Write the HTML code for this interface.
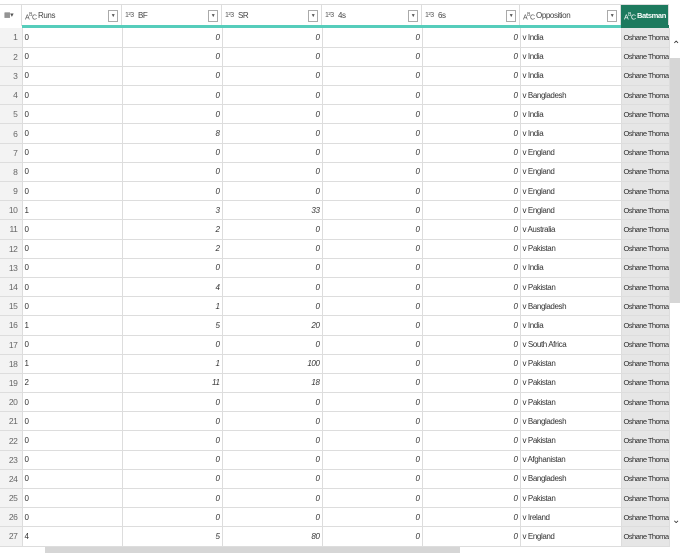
<!DOCTYPE html><html><head><style>
body{margin:0;width:685px;height:553px;overflow:hidden;background:#fff;font-family:"Liberation Sans",sans-serif;font-size:8px;color:#333;position:relative;letter-spacing:-0.4px}
.hdr{position:absolute;top:4px;left:0;height:21px;width:669px;border-top:1px solid #ddd;background:#fff}
.h{position:absolute;top:0;height:21px;border-right:1px solid #ddd;box-sizing:border-box;line-height:21px;font-size:8px;color:#444}
.h .ic{position:absolute;left:3px;top:0;font-size:7px;color:#555;letter-spacing:-0.5px}
.h .t{position:absolute;left:16px}
.h .dd{position:absolute;right:3px;top:5px;width:8px;height:10px;border:1px solid #aaa;background:#fff;font-size:5px;line-height:10px;text-align:center;color:#555}
.teal{position:absolute;top:25px;left:22px;width:599px;height:3px;background:#56cdbb}
.teal2{position:absolute;top:25px;left:621px;width:48px;height:3px;background:#1d7a5e}
table{position:absolute;top:28px;left:0;border-collapse:collapse;table-layout:fixed;width:669px}
tr{height:19.2px}
td{height:19.2px;border-right:1px solid #ddd;border-bottom:1px solid #ddd;padding:0 2px;white-space:nowrap;overflow:hidden;font-size:8px;box-sizing:border-box}
td.n{background:#f3f3f3;color:#666;text-align:right;padding-right:4px;font-size:8.5px}
td.r{text-align:right;font-style:italic}
td.b{background:#e6e6e6;color:#333;padding-left:2px;letter-spacing:-0.6px;font-size:7.6px}
</style></head><body>
<div class="hdr">
<div class="h" style="left:0;width:22px;background:#fff"><span class="ic" style="left:4px">▦▾</span></div>
<div class="h" style="left:22px;width:100px"><span class="ic">A<sup style="font-size:5px">B</sup>C</span><span class="t">Runs</span><span class="dd">▼</span></div>
<div class="h" style="left:122px;width:100px"><span class="ic">1²3</span><span class="t">BF</span><span class="dd">▼</span></div>
<div class="h" style="left:222px;width:100px"><span class="ic">1²3</span><span class="t">SR</span><span class="dd">▼</span></div>
<div class="h" style="left:322px;width:100px"><span class="ic">1²3</span><span class="t">4s</span><span class="dd">▼</span></div>
<div class="h" style="left:422px;width:98px"><span class="ic">1²3</span><span class="t">6s</span><span class="dd">▼</span></div>
<div class="h" style="left:520px;width:101px"><span class="ic">A<sup style="font-size:5px">B</sup>C</span><span class="t">Opposition</span><span class="dd">▼</span></div>
<div class="h" style="left:621px;width:48px;background:#1d7a5e;color:#fff;overflow:hidden"><span class="ic" style="color:#fff">A<sup style="font-size:5px">B</sup>C</span><span class="t" style="font-weight:bold;font-size:7.5px">Batsman</span></div>
</div>
<div class="teal"></div><div class="teal2"></div>
<table>
<colgroup><col style="width:22px"><col style="width:100px"><col style="width:100px"><col style="width:100px"><col style="width:100px"><col style="width:98px"><col style="width:101px"><col style="width:48px"></colgroup>
<tr><td class="n">1</td><td>0</td><td class="r">0</td><td class="r">0</td><td class="r">0</td><td class="r">0</td><td>v India</td><td class="b">Oshane Thomas</td></tr>
<tr><td class="n">2</td><td>0</td><td class="r">0</td><td class="r">0</td><td class="r">0</td><td class="r">0</td><td>v India</td><td class="b">Oshane Thomas</td></tr>
<tr><td class="n">3</td><td>0</td><td class="r">0</td><td class="r">0</td><td class="r">0</td><td class="r">0</td><td>v India</td><td class="b">Oshane Thomas</td></tr>
<tr><td class="n">4</td><td>0</td><td class="r">0</td><td class="r">0</td><td class="r">0</td><td class="r">0</td><td>v Bangladesh</td><td class="b">Oshane Thomas</td></tr>
<tr><td class="n">5</td><td>0</td><td class="r">0</td><td class="r">0</td><td class="r">0</td><td class="r">0</td><td>v India</td><td class="b">Oshane Thomas</td></tr>
<tr><td class="n">6</td><td>0</td><td class="r">8</td><td class="r">0</td><td class="r">0</td><td class="r">0</td><td>v India</td><td class="b">Oshane Thomas</td></tr>
<tr><td class="n">7</td><td>0</td><td class="r">0</td><td class="r">0</td><td class="r">0</td><td class="r">0</td><td>v England</td><td class="b">Oshane Thomas</td></tr>
<tr><td class="n">8</td><td>0</td><td class="r">0</td><td class="r">0</td><td class="r">0</td><td class="r">0</td><td>v England</td><td class="b">Oshane Thomas</td></tr>
<tr><td class="n">9</td><td>0</td><td class="r">0</td><td class="r">0</td><td class="r">0</td><td class="r">0</td><td>v England</td><td class="b">Oshane Thomas</td></tr>
<tr><td class="n">10</td><td>1</td><td class="r">3</td><td class="r">33</td><td class="r">0</td><td class="r">0</td><td>v England</td><td class="b">Oshane Thomas</td></tr>
<tr><td class="n">11</td><td>0</td><td class="r">2</td><td class="r">0</td><td class="r">0</td><td class="r">0</td><td>v Australia</td><td class="b">Oshane Thomas</td></tr>
<tr><td class="n">12</td><td>0</td><td class="r">2</td><td class="r">0</td><td class="r">0</td><td class="r">0</td><td>v Pakistan</td><td class="b">Oshane Thomas</td></tr>
<tr><td class="n">13</td><td>0</td><td class="r">0</td><td class="r">0</td><td class="r">0</td><td class="r">0</td><td>v India</td><td class="b">Oshane Thomas</td></tr>
<tr><td class="n">14</td><td>0</td><td class="r">4</td><td class="r">0</td><td class="r">0</td><td class="r">0</td><td>v Pakistan</td><td class="b">Oshane Thomas</td></tr>
<tr><td class="n">15</td><td>0</td><td class="r">1</td><td class="r">0</td><td class="r">0</td><td class="r">0</td><td>v Bangladesh</td><td class="b">Oshane Thomas</td></tr>
<tr><td class="n">16</td><td>1</td><td class="r">5</td><td class="r">20</td><td class="r">0</td><td class="r">0</td><td>v India</td><td class="b">Oshane Thomas</td></tr>
<tr><td class="n">17</td><td>0</td><td class="r">0</td><td class="r">0</td><td class="r">0</td><td class="r">0</td><td>v South Africa</td><td class="b">Oshane Thomas</td></tr>
<tr><td class="n">18</td><td>1</td><td class="r">1</td><td class="r">100</td><td class="r">0</td><td class="r">0</td><td>v Pakistan</td><td class="b">Oshane Thomas</td></tr>
<tr><td class="n">19</td><td>2</td><td class="r">11</td><td class="r">18</td><td class="r">0</td><td class="r">0</td><td>v Pakistan</td><td class="b">Oshane Thomas</td></tr>
<tr><td class="n">20</td><td>0</td><td class="r">0</td><td class="r">0</td><td class="r">0</td><td class="r">0</td><td>v Pakistan</td><td class="b">Oshane Thomas</td></tr>
<tr><td class="n">21</td><td>0</td><td class="r">0</td><td class="r">0</td><td class="r">0</td><td class="r">0</td><td>v Bangladesh</td><td class="b">Oshane Thomas</td></tr>
<tr><td class="n">22</td><td>0</td><td class="r">0</td><td class="r">0</td><td class="r">0</td><td class="r">0</td><td>v Pakistan</td><td class="b">Oshane Thomas</td></tr>
<tr><td class="n">23</td><td>0</td><td class="r">0</td><td class="r">0</td><td class="r">0</td><td class="r">0</td><td>v Afghanistan</td><td class="b">Oshane Thomas</td></tr>
<tr><td class="n">24</td><td>0</td><td class="r">0</td><td class="r">0</td><td class="r">0</td><td class="r">0</td><td>v Bangladesh</td><td class="b">Oshane Thomas</td></tr>
<tr><td class="n">25</td><td>0</td><td class="r">0</td><td class="r">0</td><td class="r">0</td><td class="r">0</td><td>v Pakistan</td><td class="b">Oshane Thomas</td></tr>
<tr><td class="n">26</td><td>0</td><td class="r">0</td><td class="r">0</td><td class="r">0</td><td class="r">0</td><td>v Ireland</td><td class="b">Oshane Thomas</td></tr>
<tr><td class="n">27</td><td>4</td><td class="r">5</td><td class="r">80</td><td class="r">0</td><td class="r">0</td><td>v England</td><td class="b">Oshane Thomas</td></tr>
</table>
<div style="position:absolute;left:670px;top:40px;width:12px;font-size:10px;color:#333;text-align:center">&#8963;</div>
<div style="position:absolute;left:670px;top:58px;width:10px;height:245px;background:#d6d6d6"></div>
<div style="position:absolute;left:670px;top:515px;width:12px;font-size:10px;color:#333;text-align:center">&#8964;</div>
<div style="position:absolute;left:45px;top:547px;width:415px;height:6px;background:#d6d6d6"></div>
</body></html>
